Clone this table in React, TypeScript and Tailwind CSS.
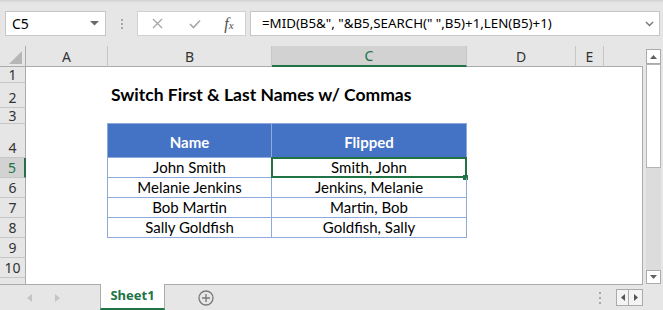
import React from "react";

const HDR = "bg-[#e6e6e6]";

function Toolbar() {
  return (
    <div className="h-[46px] shrink-0 flex items-start pt-[11px] pl-[5px] pr-[3px] bg-[#e6e6e6] shadow-[inset_0_3px_3px_-2px_rgba(0,0,0,0.12)]">
      <div className="w-[101px] h-[25px] bg-white border border-[#c6c6c6] flex items-center justify-between pl-[6px] pr-[6px]">
        <span className="text-[14px] leading-none text-black">C5</span>
        <svg width="9" height="5" viewBox="0 0 9 5">
          <path d="M0 0H9L4.5 4.5Z" fill="#6b6b6b" />
        </svg>
      </div>
      <div className="w-[31px] h-[25px] flex flex-col items-center justify-center gap-[2px]">
        <div className="w-[2px] h-[2px] bg-[#a6a6a6]" />
        <div className="w-[2px] h-[2px] bg-[#a6a6a6]" />
        <div className="w-[2px] h-[2px] bg-[#a6a6a6]" />
      </div>
      <div className="w-[109px] h-[25px] bg-white border border-[#d0d0d0] flex items-center">
        <div className="w-[38px] flex justify-center">
          <svg width="11" height="11" viewBox="0 0 11 11">
            <path d="M1 1L10 10M10 1L1 10" stroke="#a6a6a6" strokeWidth="1.3" />
          </svg>
        </div>
        <div className="w-[38px] flex justify-center">
          <svg width="12" height="10" viewBox="0 0 12 10">
            <path d="M1 5L4.5 8.5L11 1.5" stroke="#a6a6a6" strokeWidth="1.6" fill="none" />
          </svg>
        </div>
        <div className="w-[30px] flex justify-center">
          <span className="font-['Liberation_Serif',serif] italic text-[16px] leading-none text-[#505050]">
            f<span className="text-[11px]">x</span>
          </span>
        </div>
      </div>
      <div className="ml-[4px] flex-1 h-[25px] bg-white border border-[#c6c6c6] flex items-center pl-[11px] pr-[5px]">
        <span className="flex-1 text-[13.3px] leading-none text-black whitespace-pre">
          {'=MID(B5&", "&B5,SEARCH(" ",B5)+1,LEN(B5)+1)'}
        </span>
        <svg width="9" height="6" viewBox="0 0 9 6">
          <path d="M1 1L4.5 4.5L8 1" stroke="#777" strokeWidth="1.4" fill="none" />
        </svg>
      </div>
    </div>
  );
}

const cols = [
  { l: "A", sel: false },
  { l: "B", sel: false },
  { l: "C", sel: true },
  { l: "D", sel: false },
  { l: "E", sel: false },
];

const rowNums = [1, 2, 3, 4, 5, 6, 7, 8, 9, 10];

const data = [
  ["John Smith", "Smith, John"],
  ["Melanie Jenkins", "Jenkins, Melanie"],
  ["Bob Martin", "Martin, Bob"],
  ["Sally Goldfish", "Goldfish, Sally"],
];

function Sheet() {
  return (
    <div className="w-[643px] h-full bg-white grid grid-cols-[26px_82px_164px_195px_109px_28px_39px] grid-rows-[21px_16px_25px_16px_34px_20px_20px_20px_20px_20px_20px_6px] font-['Noto_Sans',sans-serif]">
      {/* corner */}
      <div className={`col-start-1 row-start-1 ${HDR} border-r border-b border-[#ababab] flex items-end justify-end pr-[3px] pb-[2px]`}>
        <svg width="13" height="13" viewBox="0 0 13 13">
          <path d="M13 0V13H0Z" fill="#b6b6b6" />
        </svg>
      </div>
      {/* column headers */}
      {cols.map((c, i) => (
        <div
          key={c.l}
          className={
            c.sel
              ? "row-start-1 bg-[#d2d2d2] border-r border-r-[#c6c6c6] border-b-2 border-b-[#217346] flex items-center justify-center text-[14px] text-[#217346]"
              : `row-start-1 ${HDR} border-r border-r-[#c6c6c6] border-b border-b-[#ababab] flex items-center justify-center text-[14px] text-[#333]`
          }
          style={{ gridColumnStart: i + 2 }}
        >
          {c.l}
        </div>
      ))}
      <div className={`col-start-7 row-start-1 ${HDR} border-b border-[#ababab]`} />
      {/* row headers */}
      {rowNums.map((n) => {
        const short = n === 1 || n === 3;
        const base = n === 5
          ? "bg-[#d2d2d2] border-r-2 border-r-[#217346] text-[#217346]"
          : `${HDR} border-r border-r-[#ababab] text-[#333]`;
        return (
          <div
            key={n}
            className={`col-start-1 ${base} border-b border-b-[#c6c6c6] flex items-end justify-center text-[14px] leading-[15px] ${short ? "pb-0" : "pb-[2px]"}`}
            style={{ gridRowStart: n + 1 }}
          >
            {n}
          </div>
        );
      })}
      <div className={`col-start-1 row-start-12 ${HDR} border-r border-[#ababab]`} />
      {/* right edge */}
      <div className="col-start-7 row-start-2 row-span-11 border-r border-[#ababab]" />
      {/* title */}
      <div className="col-start-3 col-span-3 row-start-3 flex items-end pl-[3px] pb-[5px] font-['Lato',sans-serif] font-bold text-[17.5px] leading-none text-black whitespace-nowrap">
        Switch First &amp; Last Names w/ Commas
      </div>
      {/* table */}
      <div className="col-start-3 col-span-2 row-start-5 row-span-5 -ml-px -mt-px border-l border-t border-[#8ea9db] grid grid-cols-[164px_195px] grid-rows-[34px_20px_20px_20px_20px] font-['Lato',sans-serif] text-[15px] text-black">
        <div className="bg-[#4472c4] border-r border-b border-[#8ea9db] flex items-center justify-center pt-[3px] text-white font-bold">
          Name
        </div>
        <div className="bg-[#4472c4] border-r border-b border-[#8ea9db] flex items-center justify-center pt-[3px] text-white font-bold">
          Flipped
        </div>
        {data.map((r, i) => (
          <React.Fragment key={i}>
            <div className="border-r border-b border-[#8ea9db] flex items-center justify-center leading-none">
              {r[0]}
            </div>
            <div className="relative border-r border-b border-[#8ea9db] flex items-center justify-center leading-none">
              {r[1]}
              {i === 0 && (
                <>
                  <div className="absolute -left-px -top-px -right-px -bottom-px border-2 border-[#217346]" />
                  <div className="absolute -right-[2px] -bottom-[3px] w-[5px] h-[5px] bg-[#217346]" />
                </>
              )}
            </div>
          </React.Fragment>
        ))}
      </div>
    </div>
  );
}

function VScroll() {
  return (
    <div className="w-[20px] h-full flex flex-col pt-[3px] pl-[3px] pr-[2px] bg-[#e6e6e6]">
      <div className="h-[15px] bg-white border border-[#ababab] flex items-center justify-center">
        <svg width="7" height="4" viewBox="0 0 7 4">
          <path d="M0 4H7L3.5 0Z" fill="#606060" />
        </svg>
      </div>
      <div className="flex-1 bg-[#dcdcdc] flex flex-col">
        <div className="h-[104px] bg-white border border-[#b4b4b4]" />
      </div>
      <div className="h-[14px] bg-white border border-[#ababab] flex items-center justify-center">
        <svg width="7" height="4" viewBox="0 0 7 4">
          <path d="M0 0H7L3.5 4Z" fill="#606060" />
        </svg>
      </div>
    </div>
  );
}

function BottomBar() {
  return (
    <div className="h-[26px] flex items-stretch bg-[#e6e6e6] font-['Noto_Sans',sans-serif]">
      <div className="w-[100px] border-t border-[#ababab] flex items-center">
        <svg className="ml-[27px]" width="5" height="8" viewBox="0 0 5 8">
          <path d="M5 0V8L0 4Z" fill="#c4c4c4" />
        </svg>
        <svg className="ml-[23px]" width="5" height="8" viewBox="0 0 5 8">
          <path d="M0 0V8L5 4Z" fill="#c4c4c4" />
        </svg>
      </div>
      <div className="w-[65px] bg-white border-x border-[#ababab] border-b-2 border-b-[#217346] flex items-center justify-center text-[13px] font-bold text-[#217346]">
        Sheet1
      </div>
      <div className="w-[478px] border-t border-[#ababab] flex items-center">
        <svg className="ml-[33px]" width="16" height="16" viewBox="0 0 16 16">
          <circle cx="8" cy="8" r="7" stroke="#7a7a7a" strokeWidth="1.3" fill="none" />
          <path d="M8 4V12M4 8H12" stroke="#7a7a7a" strokeWidth="1.4" />
        </svg>
        <div className="flex-1" />
        <div className="flex flex-col gap-[3px] mr-[15px]">
          <div className="w-[2px] h-[2px] bg-[#a6a6a6]" />
          <div className="w-[2px] h-[2px] bg-[#a6a6a6]" />
          <div className="w-[2px] h-[2px] bg-[#a6a6a6]" />
        </div>
        <div className="flex h-[17px]">
          <div className="w-[13px] bg-[#f4f4f4] border border-[#ababab] flex items-center justify-center">
            <svg width="4" height="7" viewBox="0 0 4 7">
              <path d="M4 0V7L0 3.5Z" fill="#555" />
            </svg>
          </div>
          <div className="w-[14px] bg-[#f4f4f4] border border-l-0 border-[#ababab] flex items-center justify-center">
            <svg width="4" height="7" viewBox="0 0 4 7">
              <path d="M0 0V7L4 3.5Z" fill="#555" />
            </svg>
          </div>
        </div>
      </div>
      <div className="w-[20px]" />
    </div>
  );
}

export default function App() {
  return (
    <div className="w-[663px] h-[310px] bg-[#e6e6e6] flex flex-col overflow-hidden font-['Noto_Sans',sans-serif]">
      <Toolbar />
      <div className="flex h-[238px] shrink-0">
        <Sheet />
        <VScroll />
      </div>
      <BottomBar />
    </div>
  );
}
